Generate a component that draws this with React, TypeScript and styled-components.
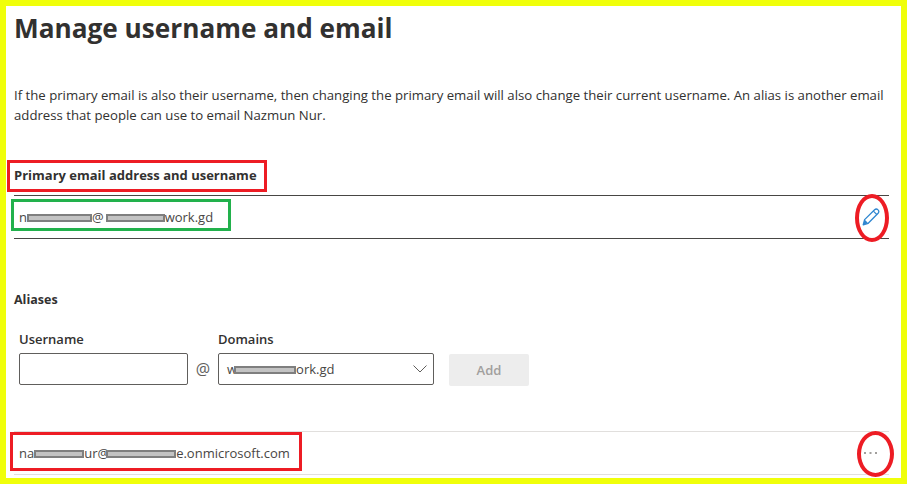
import React from 'react';
import styled, { createGlobalStyle } from 'styled-components';

const FONT = '"Open Sans", "Noto Sans", "Liberation Sans", sans-serif';

const GlobalStyle = createGlobalStyle`
  html, body {
    margin: 0;
    padding: 0;
    background: #ffffff;
  }
`;

function Pencil() {
  return (
    <svg width="18" height="18" viewBox="0 0 18 18" fill="none">
      <path
        d="M1.2 16.8 L2.6 11.6 L12.6 1.8 C13.6 0.9 15 0.9 16 1.9 C17 2.9 17 4.2 16.1 5.2 L6.2 15.3 Z"
        fill="#ffffff"
        stroke="#2f86d0"
        strokeWidth="1.3"
        strokeLinejoin="round"
      />
      <path d="M11.4 3.2 L14.8 6.5" stroke="#2f86d0" strokeWidth="1.1" />
      <path d="M1.2 16.8 L2.6 11.6 L6.2 15.3 Z" fill="#2f86d0" />
    </svg>
  );
}

function Chevron() {
  return (
    <svg width="14" height="8" viewBox="0 0 14 8" fill="none">
      <path d="M0.5 0.5 L7 7 L13.5 0.5" stroke="#605e5c" strokeWidth="1" />
    </svg>
  );
}

function MoreDots() {
  return (
    <svg width="13" height="2" viewBox="0 0 13 2" fill="#a19f9d">
      <rect x="0" y="0" width="2" height="2" />
      <rect x="5.5" y="0" width="2" height="2" />
      <rect x="11" y="0" width="2" height="2" />
    </svg>
  );
}

export default function App() {
  return (
    <>
      <GlobalStyle />
      <Frame>
        <Title>Manage username and email</Title>
        <Intro>
          If the primary email is also their username, then changing the primary email will also change their current
          username. An alias is another email address that people can use to email Nazmun Nur.
        </Intro>

        <SectionLabel>
          Primary email address and username
          <RedBox $left={-7} $top={-5} $width={260} $height={32} />
        </SectionLabel>
        <PrimaryRow>
          <RowText>
            n<Redact $width={65} />@<Redact $width={59} $gap={2} />
            work.gd
          </RowText>
          <IconSlot>
            <Pencil />
          </IconSlot>
          <GreenBox />
          <Oval $left={841} $top={-2} $width={34} $height={48} />
        </PrimaryRow>

        <AliasLabel>Aliases</AliasLabel>
        <AliasForm>
          <Field>
            <FieldLabel>Username</FieldLabel>
            <TextInput />
          </Field>
          <AtSign>@</AtSign>
          <Field>
            <FieldLabel>Domains</FieldLabel>
            <Select>
              <span>
                w<Redact $width={62} $gap={-3} />
                ork.gd
              </span>
              <Chevron />
            </Select>
          </Field>
          <AddButton>Add</AddButton>
        </AliasForm>

        <AliasRow>
          <RowText>
            na<Redact $width={50} />
            ur@
            <Redact $width={70} $gap={-3} />
            e.onmicrosoft.com
          </RowText>
          <MoreDots />
          <RedBox $left={-4} $top={0} $width={292} $height={39} />
          <Oval $left={843} $top={-1} $width={37} $height={46} />
        </AliasRow>
      </Frame>
    </>
  );
}

const Frame = styled.div`
  box-sizing: border-box;
  width: 907px;
  height: 484px;
  border: 6px solid #f0ff0a;
  padding: 0 12px 0 8px;
  font-family: ${FONT};
  color: #323130;
  overflow: hidden;
`;

const Title = styled.h1`
  margin: 4px 0 0;
  font-size: 26.2px;
  line-height: 36px;
  font-weight: 700;
`;

const Intro = styled.p`
  margin: 39px 0 0;
  font-size: 13.2px;
  line-height: 20px;
`;

const SectionLabel = styled.div`
  position: relative;
  margin-top: 40px;
  font-size: 13px;
  line-height: 20px;
  font-weight: 700;
`;

const RedBox = styled.div<{ $left: number; $top: number; $width: number; $height: number }>`
  position: absolute;
  box-sizing: border-box;
  left: ${(p) => p.$left}px;
  top: ${(p) => p.$top}px;
  width: ${(p) => p.$width}px;
  height: ${(p) => p.$height}px;
  border: 3px solid #ed1c24;
`;

const Oval = styled.div<{ $left: number; $top: number; $width: number; $height: number }>`
  position: absolute;
  box-sizing: border-box;
  left: ${(p) => p.$left}px;
  top: ${(p) => p.$top}px;
  width: ${(p) => p.$width}px;
  height: ${(p) => p.$height}px;
  border: 4px solid #ed1c24;
  border-radius: 50%;
`;

const PrimaryRow = styled.div`
  position: relative;
  box-sizing: border-box;
  height: 44px;
  margin-top: 10px;
  padding: 0 10px 0 5px;
  display: flex;
  align-items: center;
  justify-content: space-between;
  border-top: 1px solid #484644;
  border-bottom: 1px solid #484644;
`;

const GreenBox = styled.div`
  position: absolute;
  box-sizing: border-box;
  left: -3px;
  top: 3px;
  width: 220px;
  height: 32px;
  border: 3px solid #22b14c;
`;

const RowText = styled.span`
  font-size: 13px;
  line-height: 20px;
  color: #484644;
  white-space: nowrap;
`;

const Redact = styled.span<{ $width: number; $gap?: number }>`
  display: inline-block;
  box-sizing: border-box;
  width: ${(p) => p.$width}px;
  height: 8px;
  margin-left: ${(p) => p.$gap ?? 0}px;
  background: #c3c3c3;
  border: 2px solid #7f7f7f;
  vertical-align: 0;
`;

const IconSlot = styled.span`
  display: flex;
  margin-right: -1px;
`;

const AliasLabel = styled.div`
  margin-top: 51px;
  font-size: 12.5px;
  line-height: 20px;
  font-weight: 700;
`;

const AliasForm = styled.div`
  display: flex;
  align-items: flex-end;
  margin-top: 19px;
  padding-left: 5px;
`;

const Field = styled.div`
  display: flex;
  flex-direction: column;
`;

const FieldLabel = styled.label`
  font-size: 13px;
  line-height: 20px;
  font-weight: 600;
  margin-bottom: 4px;
`;

const TextInput = styled.div`
  box-sizing: border-box;
  width: 169px;
  height: 32px;
  border: 1px solid #605e5c;
  border-radius: 2px;
`;

const AtSign = styled.span`
  width: 30px;
  height: 32px;
  display: flex;
  align-items: center;
  justify-content: center;
  font-size: 16px;
  color: #605e5c;
`;

const Select = styled.div`
  box-sizing: border-box;
  width: 216px;
  height: 32px;
  padding: 0 6px 0 8px;
  display: flex;
  align-items: center;
  justify-content: space-between;
  border: 1px solid #605e5c;
  border-radius: 2px;
  font-size: 13px;
  color: #484644;
`;

const AddButton = styled.div`
  box-sizing: border-box;
  width: 80px;
  height: 32px;
  margin: 0 0 -1px 15px;
  display: flex;
  align-items: center;
  justify-content: center;
  background: #ededed;
  border-radius: 2px;
  font-size: 13px;
  font-weight: 600;
  color: #a19f9d;
`;

const AliasRow = styled.div`
  position: relative;
  box-sizing: border-box;
  height: 44px;
  margin-top: 46px;
  padding: 0 12px 0 5px;
  display: flex;
  align-items: center;
  justify-content: space-between;
  border-top: 1px solid #e1dfdd;
  border-bottom: 1px solid #e1dfdd;
`;
